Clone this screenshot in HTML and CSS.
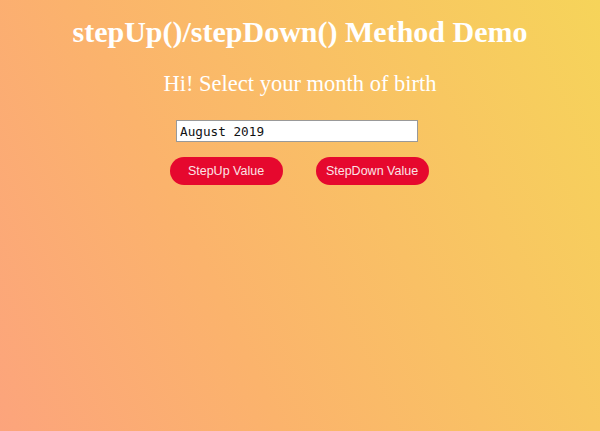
FILE: index.html
```html
<!DOCTYPE html>
<html lang="en">
<head>
    <meta charset="UTF-8">
    <meta name="viewport" content="width=device-width, initial-scale=1.0">
    <title>stepUp()/stepDown() Method Demo</title>
    <link rel="stylesheet" href="styles.css">
</head>
<body>
    <div class="container">
        <h1>stepUp()/stepDown() Method Demo</h1>
        <h2>Hi! Select your month of birth</h2>
        <input type="text" id="month" class="month-input" value="August 2019">
        <div class="actions">
            <button onclick="stepMonth(1)">StepUp Value</button>
            <button onclick="stepMonth(-1)">StepDown Value</button>
        </div>
    </div>

    <script>
        const months = ['January', 'February', 'March', 'April', 'May', 'June',
            'July', 'August', 'September', 'October', 'November', 'December'];
        let month = 7; // August
        let year = 2019;

        function stepMonth(step) {
            month += step;
            if (month > 11) { month = 0; year++; }
            if (month < 0) { month = 11; year--; }
            document.getElementById('month').value = months[month] + ' ' + year;
        }
    </script>
</body>
</html>
```

FILE: styles.css
```css
html {
    min-height: 100%;
    background: linear-gradient(65deg, #fca47c 0%, #fbb36c 35%, #f6d45a 100%);
}
body {
    margin: 0;
    padding: 0;
    font-family: "Liberation Serif", "Times New Roman", serif;
    color: #fff;
}
.container {
    text-align: center;
    padding-top: 14px;
}
h1 {
    font-size: 30px;
    font-weight: bold;
    margin: 0;
    line-height: 36px;
}
h2 {
    font-size: 22.5px;
    font-weight: normal;
    margin: 21px 0 0;
    line-height: 26px;
}
.month-input {
    display: block;
    margin: 23px auto 0 176px;
    width: 242px;
    height: 22px;
    box-sizing: border-box;
    padding: 0 3px;
    border: 1px solid #999;
    font-family: "DejaVu Sans Mono", monospace;
    font-size: 12.7px;
    color: #111;
    background: #fff;
}
.actions {
    display: flex;
    justify-content: center;
    gap: 33px;
    margin-top: 15px;
    padding-right: 2px;
}
.actions button {
    width: 113px;
    height: 28px;
    border: none;
    border-radius: 14px;
    background: #e6082e;
    color: #fbe3e6;
    font-family: "Liberation Sans", Arial, sans-serif;
    font-size: 12.5px;
    cursor: pointer;
}
```
